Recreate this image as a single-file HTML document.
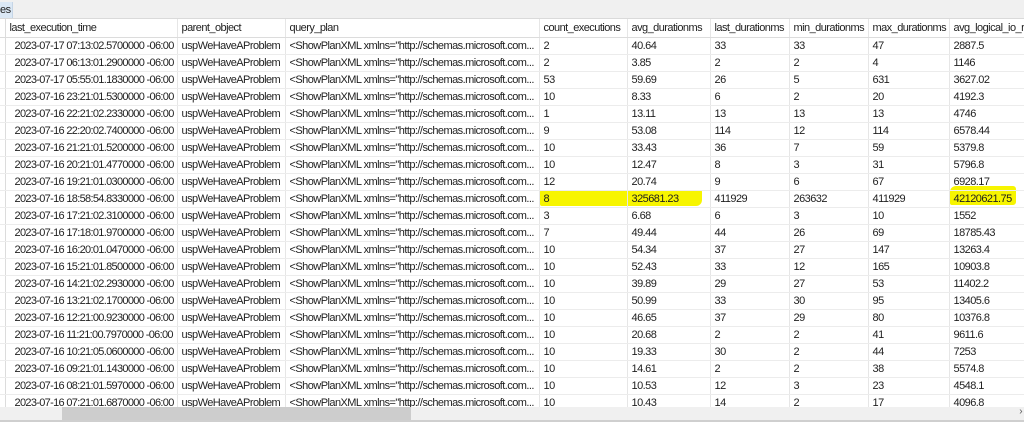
<!DOCTYPE html>
<html><head><meta charset="utf-8"><style>
body{margin:0;width:1024px;height:423px;overflow:hidden;background:#fff;font-family:"Liberation Sans",Arial,sans-serif;font-size:11px;letter-spacing:-0.55px;color:#1e1e1e;position:relative}
.tabbar{position:absolute;left:0;top:0;width:1024px;height:18px;background:#f0f0f0;border-bottom:1px solid #dadada}
.tab{position:absolute;left:0;top:2px;width:12px;height:16px;background:#dbe8f5;border-right:1px solid #c5d5e6;font-size:11px;line-height:16px}
table{position:absolute;left:0;top:19px;border-collapse:collapse;table-layout:fixed;width:1090px}
td{height:16.86px;padding:0 0 0 4px;border-right:1px solid #e6e6e6;border-bottom:1px solid #ececec;white-space:nowrap;overflow:hidden;line-height:16px;box-sizing:border-box}
tr.h td{height:18px;border-bottom:1px solid #dcdcdc}
td.r{padding:0;border-right:1px solid #dcdcdc}
.c1{padding-left:9px;letter-spacing:-0.68px}
.hl{position:absolute;background:#f7f500;border-radius:2px}
.sb{position:absolute;left:0;top:407px;width:1024px;height:13px;background:#f0f0f0;border-bottom:2px solid #cfcfcf}
.th{position:absolute;left:62px;top:407px;width:349px;height:13px;background:#cdcdcd}
.arr{position:absolute;right:2px;top:406px;font-size:10px;color:#555}
span{position:relative}
</style></head><body>
<div class="tabbar"><div class="tab">es</div></div>
<div class="hl" style="left:540px;top:190px;width:162px;height:16px;border-radius:2px 2px 6px 2px"></div>
<div class="hl" style="left:950px;top:186px;width:66px;height:19px;border-radius:6px 3px 3px 2px"></div>
<table>
<colgroup><col style="width:5px"><col style="width:172px"><col style="width:108px"><col style="width:254px"><col style="width:88px"><col style="width:83px"><col style="width:79px"><col style="width:79px"><col style="width:81px"><col style="width:141px"></colgroup>
<tr class="h"><td class="r"></td><td>last_execution_time</td><td>parent_object</td><td>query_plan</td><td>count_executions</td><td>avg_durationms</td><td>last_durationms</td><td>min_durationms</td><td>max_durationms</td><td>avg_logical_io_reads</td></tr>
<tr><td class="r"></td><td class="c1">2023-07-17 07:13:02.5700000 -06:00</td><td>uspWeHaveAProblem</td><td>&lt;ShowPlanXML xmlns="http://schemas.microsoft.com...</td><td>2</td><td>40.64</td><td>33</td><td>33</td><td>47</td><td>2887.5</td></tr>
<tr><td class="r"></td><td class="c1">2023-07-17 06:13:01.2900000 -06:00</td><td>uspWeHaveAProblem</td><td>&lt;ShowPlanXML xmlns="http://schemas.microsoft.com...</td><td>2</td><td>3.85</td><td>2</td><td>2</td><td>4</td><td>1146</td></tr>
<tr><td class="r"></td><td class="c1">2023-07-17 05:55:01.1830000 -06:00</td><td>uspWeHaveAProblem</td><td>&lt;ShowPlanXML xmlns="http://schemas.microsoft.com...</td><td>53</td><td>59.69</td><td>26</td><td>5</td><td>631</td><td>3627.02</td></tr>
<tr><td class="r"></td><td class="c1">2023-07-16 23:21:01.5300000 -06:00</td><td>uspWeHaveAProblem</td><td>&lt;ShowPlanXML xmlns="http://schemas.microsoft.com...</td><td>10</td><td>8.33</td><td>6</td><td>2</td><td>20</td><td>4192.3</td></tr>
<tr><td class="r"></td><td class="c1">2023-07-16 22:21:02.2330000 -06:00</td><td>uspWeHaveAProblem</td><td>&lt;ShowPlanXML xmlns="http://schemas.microsoft.com...</td><td>1</td><td>13.11</td><td>13</td><td>13</td><td>13</td><td>4746</td></tr>
<tr><td class="r"></td><td class="c1">2023-07-16 22:20:02.7400000 -06:00</td><td>uspWeHaveAProblem</td><td>&lt;ShowPlanXML xmlns="http://schemas.microsoft.com...</td><td>9</td><td>53.08</td><td>114</td><td>12</td><td>114</td><td>6578.44</td></tr>
<tr><td class="r"></td><td class="c1">2023-07-16 21:21:01.5200000 -06:00</td><td>uspWeHaveAProblem</td><td>&lt;ShowPlanXML xmlns="http://schemas.microsoft.com...</td><td>10</td><td>33.43</td><td>36</td><td>7</td><td>59</td><td>5379.8</td></tr>
<tr><td class="r"></td><td class="c1">2023-07-16 20:21:01.4770000 -06:00</td><td>uspWeHaveAProblem</td><td>&lt;ShowPlanXML xmlns="http://schemas.microsoft.com...</td><td>10</td><td>12.47</td><td>8</td><td>3</td><td>31</td><td>5796.8</td></tr>
<tr><td class="r"></td><td class="c1">2023-07-16 19:21:01.0300000 -06:00</td><td>uspWeHaveAProblem</td><td>&lt;ShowPlanXML xmlns="http://schemas.microsoft.com...</td><td>12</td><td>20.74</td><td>9</td><td>6</td><td>67</td><td>6928.17</td></tr>
<tr><td class="r"></td><td class="c1">2023-07-16 18:58:54.8330000 -06:00</td><td>uspWeHaveAProblem</td><td>&lt;ShowPlanXML xmlns="http://schemas.microsoft.com...</td><td><span>8</span></td><td><span>325681.23</span></td><td>411929</td><td>263632</td><td>411929</td><td><span>42120621.75</span></td></tr>
<tr><td class="r"></td><td class="c1">2023-07-16 17:21:02.3100000 -06:00</td><td>uspWeHaveAProblem</td><td>&lt;ShowPlanXML xmlns="http://schemas.microsoft.com...</td><td>3</td><td>6.68</td><td>6</td><td>3</td><td>10</td><td>1552</td></tr>
<tr><td class="r"></td><td class="c1">2023-07-16 17:18:01.9700000 -06:00</td><td>uspWeHaveAProblem</td><td>&lt;ShowPlanXML xmlns="http://schemas.microsoft.com...</td><td>7</td><td>49.44</td><td>44</td><td>26</td><td>69</td><td>18785.43</td></tr>
<tr><td class="r"></td><td class="c1">2023-07-16 16:20:01.0470000 -06:00</td><td>uspWeHaveAProblem</td><td>&lt;ShowPlanXML xmlns="http://schemas.microsoft.com...</td><td>10</td><td>54.34</td><td>37</td><td>27</td><td>147</td><td>13263.4</td></tr>
<tr><td class="r"></td><td class="c1">2023-07-16 15:21:01.8500000 -06:00</td><td>uspWeHaveAProblem</td><td>&lt;ShowPlanXML xmlns="http://schemas.microsoft.com...</td><td>10</td><td>52.43</td><td>33</td><td>12</td><td>165</td><td>10903.8</td></tr>
<tr><td class="r"></td><td class="c1">2023-07-16 14:21:02.2930000 -06:00</td><td>uspWeHaveAProblem</td><td>&lt;ShowPlanXML xmlns="http://schemas.microsoft.com...</td><td>10</td><td>39.89</td><td>29</td><td>27</td><td>53</td><td>11402.2</td></tr>
<tr><td class="r"></td><td class="c1">2023-07-16 13:21:02.1700000 -06:00</td><td>uspWeHaveAProblem</td><td>&lt;ShowPlanXML xmlns="http://schemas.microsoft.com...</td><td>10</td><td>50.99</td><td>33</td><td>30</td><td>95</td><td>13405.6</td></tr>
<tr><td class="r"></td><td class="c1">2023-07-16 12:21:00.9230000 -06:00</td><td>uspWeHaveAProblem</td><td>&lt;ShowPlanXML xmlns="http://schemas.microsoft.com...</td><td>10</td><td>46.65</td><td>37</td><td>29</td><td>80</td><td>10376.8</td></tr>
<tr><td class="r"></td><td class="c1">2023-07-16 11:21:00.7970000 -06:00</td><td>uspWeHaveAProblem</td><td>&lt;ShowPlanXML xmlns="http://schemas.microsoft.com...</td><td>10</td><td>20.68</td><td>2</td><td>2</td><td>41</td><td>9611.6</td></tr>
<tr><td class="r"></td><td class="c1">2023-07-16 10:21:05.0600000 -06:00</td><td>uspWeHaveAProblem</td><td>&lt;ShowPlanXML xmlns="http://schemas.microsoft.com...</td><td>10</td><td>19.33</td><td>30</td><td>2</td><td>44</td><td>7253</td></tr>
<tr><td class="r"></td><td class="c1">2023-07-16 09:21:01.1430000 -06:00</td><td>uspWeHaveAProblem</td><td>&lt;ShowPlanXML xmlns="http://schemas.microsoft.com...</td><td>10</td><td>14.61</td><td>2</td><td>2</td><td>38</td><td>5574.8</td></tr>
<tr><td class="r"></td><td class="c1">2023-07-16 08:21:01.5970000 -06:00</td><td>uspWeHaveAProblem</td><td>&lt;ShowPlanXML xmlns="http://schemas.microsoft.com...</td><td>10</td><td>10.53</td><td>12</td><td>3</td><td>23</td><td>4548.1</td></tr>
<tr><td class="r"></td><td class="c1">2023-07-16 07:21:01.6870000 -06:00</td><td>uspWeHaveAProblem</td><td>&lt;ShowPlanXML xmlns="http://schemas.microsoft.com...</td><td>10</td><td>10.43</td><td>14</td><td>2</td><td>17</td><td>4096.8</td></tr>
</table>
<div class="sb"></div><div class="th"></div><div class="arr">&#x203A;</div>
</body></html>
